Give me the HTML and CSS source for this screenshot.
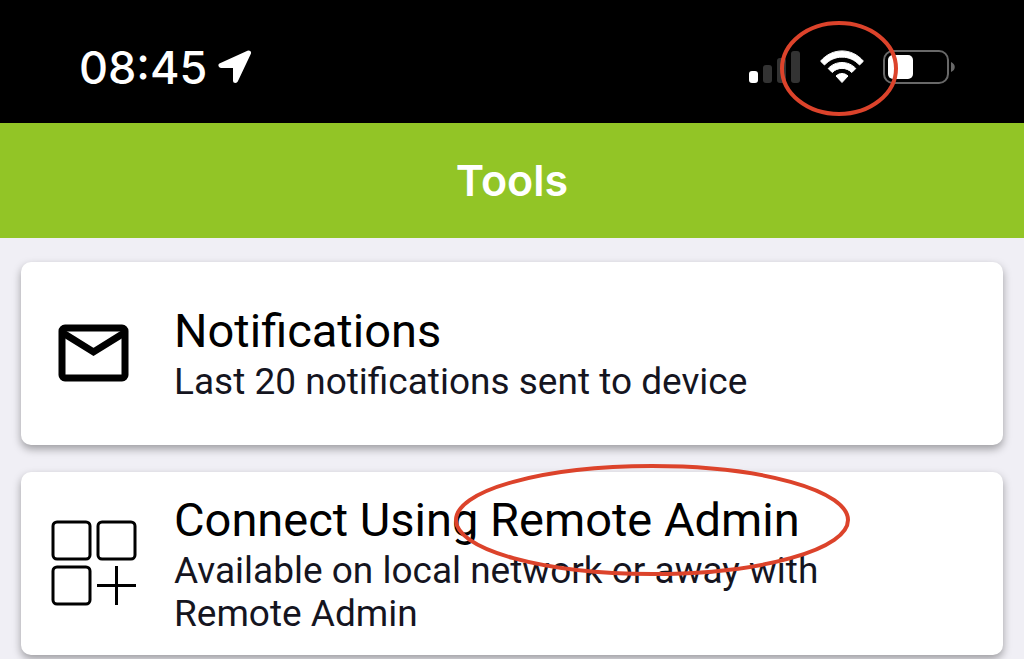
FILE: index.html
```html
<!DOCTYPE html>
<html lang="en">
<head>
<meta charset="UTF-8">
<meta name="viewport" content="width=device-width, initial-scale=1.0">
<title>Tools</title>
<link rel="stylesheet" href="styles.css">
</head>
<body>

<div class="status-bar">
  <div class="status-left">
    <span class="time">08:45</span>
    <svg class="location" width="36" height="36" viewBox="0 0 36 36">
      <path d="M31.500 4L4 16.500H18.500V31.500Z" fill="#fff" stroke="#fff" stroke-width="5" stroke-linejoin="round"/>
    </svg>
  </div>
  <div class="status-right">
    <svg class="signal" width="52" height="34" viewBox="0 0 52 34">
      <rect x="0" y="21" width="9" height="12" rx="3" fill="#fff"/>
      <rect x="14" y="15" width="9" height="18" rx="3" fill="#333"/>
      <rect x="28" y="8" width="9" height="25" rx="3" fill="#333"/>
      <rect x="42" y="1" width="9" height="32" rx="3" fill="#333"/>
    </svg>
    <div class="wifi-wrap">
      <svg class="wifi" width="44" height="34" viewBox="0 0 44 34">
        <path d="M.6 11.200C12-2.500 32-2.500 43.400 11.200L39.500 15C30 4.500 14 4.500 4.500 15Z" fill="#fff" stroke="#fff" stroke-linejoin="round"/>
        <path d="M8.200 18.500C15.500 10.500 28.500 10.500 35.800 18.500L31.800 22.500C26.500 17 17.500 17 12.200 22.500Z" fill="#fff" stroke="#fff" stroke-linejoin="round"/>
        <path d="M16 26C19.500 22.700 24.500 22.700 28 26L22 32.500Z" fill="#fff" stroke="#fff" stroke-linejoin="round"/>
      </svg>
      <svg class="ring ring-wifi" viewBox="0 0 118 95">
        <ellipse cx="59" cy="47.500" rx="57" ry="45.500"/>
      </svg>
    </div>
    <svg class="battery" width="72" height="34" viewBox="0 0 72 34">
      <rect x="1" y="1" width="64" height="32" rx="9" fill="none" stroke="#686868" stroke-width="2"/>
      <rect x="5" y="5" width="25" height="24" rx="5" fill="#fff"/>
      <path d="M68 12C73 14 73 20 68 22Z" fill="#686868"/>
    </svg>
  </div>
</div>

<header class="header">
  <h1 class="header-title">Tools</h1>
</header>

<main class="tools">
  <a class="card" href="#notifications">
    <span class="card-icon">
      <svg width="72" height="58" viewBox="0 0 72 58">
        <rect x="4" y="4" width="63" height="50" rx="3" fill="none" stroke="#000" stroke-width="7"/>
        <path d="M5 9L35.500 28L66 9" fill="none" stroke="#000" stroke-width="7"/>
      </svg>
    </span>
    <span class="card-text">
      <span class="card-title">Notifications</span>
      <span class="card-desc">Last 20 notifications sent to device</span>
    </span>
  </a>

  <a class="card" href="#remote-admin">
    <span class="card-icon">
      <svg width="86" height="86" viewBox="0 0 86 86" fill="none" stroke="#000" stroke-width="3">
        <rect x="2" y="2" width="37" height="37" rx="4"/>
        <rect x="47" y="2" width="37" height="37" rx="4"/>
        <rect x="2" y="47" width="37" height="37" rx="4"/>
        <path d="M65.500 46V85M46 65.500H85"/>
      </svg>
    </span>
    <span class="card-text">
      <span class="card-title">Connect Using
        <span class="marked">Remote Admin
          <svg class="ring ring-admin" viewBox="0 0 396 112">
            <ellipse cx="198" cy="56" rx="196" ry="54"/>
          </svg>
        </span>
      </span>
      <span class="card-desc">Available on local network or away with Remote Admin</span>
    </span>
  </a>
</main>

</body>
</html>
```

FILE: styles.css
```css
body {
  margin: 0;
  background-color: #f0eff5;
  font-family: Roboto, sans-serif;
}

.status-bar {
  display: flex;
  justify-content: space-between;
  align-items: center;
  box-sizing: border-box;
  height: 123px;
  padding: 11px 69px 0 79px;
  background-color: #000;
  color: #fff;
}

.status-left,
.status-right {
  display: flex;
  align-items: center;
}

.status-left {
  gap: 10px;
}

.status-right {
  gap: 19px;
}

.time {
  font-family: Inter, sans-serif;
  font-size: 45px;
  font-weight: 500;
}

.wifi-wrap {
  position: relative;
  display: flex;
}

.header {
  display: flex;
  justify-content: center;
  align-items: center;
  box-sizing: border-box;
  height: 115px;
  padding-bottom: 2px;
  background-color: #92c526;
}

.header-title {
  margin: 0;
  font-family: Inter, sans-serif;
  font-size: 43px;
  font-weight: 600;
  color: #fff;
}

.tools {
  display: flex;
  flex-direction: column;
  gap: 27px;
  padding: 24px 21px 4px;
}

.card {
  display: flex;
  align-items: center;
  box-sizing: border-box;
  min-height: 183px;
  padding: 0 100px 2px 22px;
  border-radius: 10px;
  background-color: #fff;
  box-shadow: 0 4px 8px rgba(0, 0, 0, 0.35);
  color: #000;
  text-decoration: none;
}

.card-icon {
  display: flex;
  justify-content: center;
  flex: none;
  width: 101px;
  margin-right: 30px;
}

.card-text {
  display: flex;
  flex-direction: column;
}

.card-title {
  font-size: 47px;
  line-height: 58px;
}

.card-desc {
  font-size: 37px;
  line-height: 43px;
  color: #15151f;
}

.marked {
  position: relative;
}

/* hand drawn style highlight, sits over the content */
.ring {
  position: absolute;
  z-index: 1;
  fill: none;
  stroke: #dc432b;
  stroke-width: 4px;
  pointer-events: none;
}

.ring-wifi {
  top: -29px;
  left: -40px;
  width: 118px;
  height: 95px;
}

.ring-admin {
  top: -28px;
  left: -36px;
  width: 396px;
  height: 112px;
}
```
